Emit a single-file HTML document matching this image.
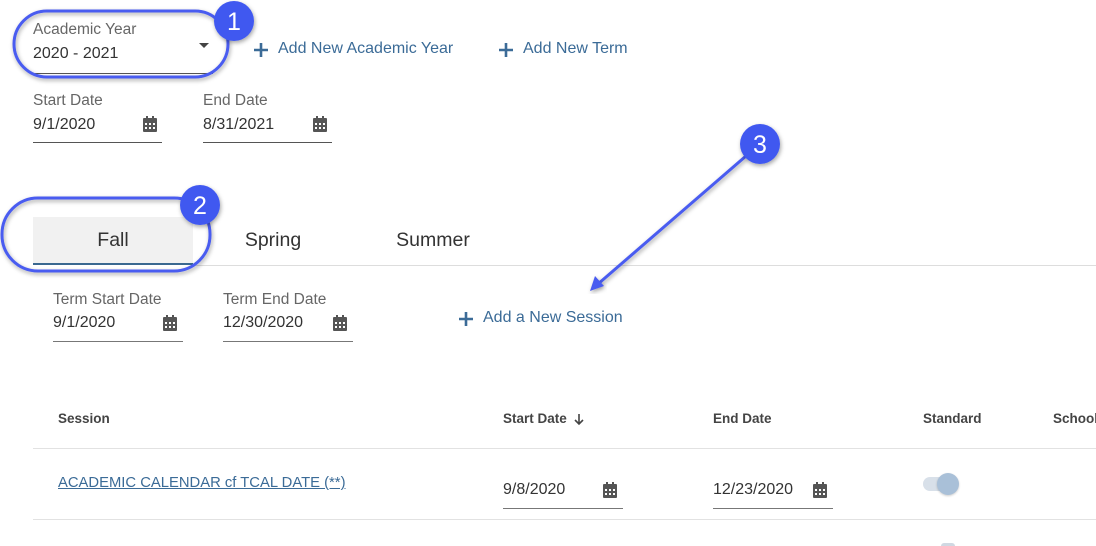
<!DOCTYPE html>
<html style="overflow:hidden;height:546px"><head><style>
body{margin:0;width:1096px;height:546px;overflow:hidden;background:#fff;font-family:"Liberation Sans",sans-serif;position:relative}
.a{position:absolute;white-space:nowrap}
.lbl{font-size:15.5px;color:#666}
.val{font-size:16px;color:#333}
.ul{position:absolute;height:1px;background:#555}
.lnk{font-size:16px;color:#3b6b97}
.th{font-size:13.5px;font-weight:bold;color:#444}
.hl{position:absolute;height:1px;background:#e2e2e2}
</style></head><body>
<svg width="0" height="0" style="position:absolute"><defs>
<symbol id="cal" viewBox="0 0 14 16"><rect x="3" y="0" width="2" height="3" fill="#555"/><rect x="9" y="0" width="2" height="3" fill="#555"/><rect x="0" y="2" width="14" height="14" rx="1" fill="#555"/><g fill="#fff"><rect x="2" y="7" width="2" height="2"/><rect x="6" y="7" width="2" height="2"/><rect x="10" y="7" width="2" height="2"/><rect x="2" y="11" width="2" height="2"/><rect x="6" y="11" width="2" height="2"/><rect x="10" y="11" width="2" height="2"/></g></symbol>
<symbol id="plus" viewBox="0 0 14 14"><path d="M7 0v14M0 7h14" stroke="#3b6b97" stroke-width="2.6"/></symbol>
</defs></svg>

<div class="a lbl" style="left:33px;top:21px">Academic Year</div>
<div class="a val" style="left:33px;top:45px">2020 - 2021</div>
<svg class="a" style="left:199px;top:43px" width="10" height="6"><path d="M0 0h10L5 5z" fill="#444"/></svg>
<div class="ul" style="left:33px;top:73px;width:180px"></div>

<svg class="a" style="left:254px;top:43px" width="14" height="14"><use href="#plus"/></svg>
<div class="a lnk" style="left:278px;top:40px">Add New Academic Year</div>
<svg class="a" style="left:499px;top:43px" width="14" height="14"><use href="#plus"/></svg>
<div class="a lnk" style="left:523px;top:40px">Add New Term</div>

<div class="a lbl" style="left:33px;top:92px">Start Date</div>
<div class="a val" style="left:33px;top:116px">9/1/2020</div>
<svg class="a" style="left:143px;top:116px" width="14" height="16"><use href="#cal"/></svg>
<div class="ul" style="left:33px;top:142px;width:129px"></div>
<div class="a lbl" style="left:203px;top:92px">End Date</div>
<div class="a val" style="left:203px;top:116px">8/31/2021</div>
<svg class="a" style="left:313px;top:116px" width="14" height="16"><use href="#cal"/></svg>
<div class="ul" style="left:203px;top:142px;width:129px"></div>

<div class="a" style="left:33px;top:217px;width:160px;height:46px;background:#f1f1f1"></div>
<div class="a" style="left:33px;top:263px;width:160px;height:2px;background:#3a6890"></div>
<div class="hl" style="left:193px;top:265px;width:903px;background:#ddd"></div>
<div class="a" style="left:33px;top:229px;width:160px;text-align:center;font-size:19.5px;color:#333">Fall</div>
<div class="a" style="left:193px;top:229px;width:160px;text-align:center;font-size:19.5px;color:#333">Spring</div>
<div class="a" style="left:353px;top:229px;width:160px;text-align:center;font-size:19.5px;color:#333">Summer</div>

<div class="a lbl" style="left:53px;top:291px">Term Start Date</div>
<div class="a val" style="left:53px;top:314px">9/1/2020</div>
<svg class="a" style="left:163px;top:315px" width="14" height="16"><use href="#cal"/></svg>
<div class="ul" style="left:53px;top:341px;width:130px;background:#777"></div>
<div class="a lbl" style="left:223px;top:291px">Term End Date</div>
<div class="a val" style="left:223px;top:314px">12/30/2020</div>
<svg class="a" style="left:333px;top:315px" width="14" height="16"><use href="#cal"/></svg>
<div class="ul" style="left:223px;top:341px;width:130px;background:#777"></div>
<svg class="a" style="left:459px;top:312px" width="14" height="14"><use href="#plus"/></svg>
<div class="a lnk" style="left:483px;top:309px">Add a New Session</div>

<div class="a th" style="left:58px;top:411px">Session</div>
<div class="a th" style="left:503px;top:411px">Start Date</div>
<svg class="a" style="left:574px;top:414px" width="10" height="12"><path d="M5 0v10M1 6l4 4 4-4" stroke="#444" stroke-width="1.6" fill="none"/></svg>
<div class="a th" style="left:713px;top:411px">End Date</div>
<div class="a th" style="left:923px;top:411px">Standard</div>
<div class="a th" style="left:1053px;top:411px">School</div>
<div class="hl" style="left:33px;top:448px;width:1063px"></div>
<div class="a" style="left:58px;top:475px;font-size:14.8px;color:#3b6b97;text-decoration:underline">ACADEMIC CALENDAR cf TCAL DATE (**)</div>
<div class="a val" style="left:503px;top:481px">9/8/2020</div>
<svg class="a" style="left:603px;top:482px" width="14" height="16"><use href="#cal"/></svg>
<div class="ul" style="left:503px;top:508px;width:120px;background:#777"></div>
<div class="a val" style="left:713px;top:481px">12/23/2020</div>
<svg class="a" style="left:813px;top:482px" width="14" height="16"><use href="#cal"/></svg>
<div class="ul" style="left:713px;top:508px;width:120px;background:#777"></div>
<div class="a" style="left:923px;top:477px;width:34px;height:14px;border-radius:7px;background:#d8e0e9"></div>
<div class="a" style="left:937px;top:473px;width:22px;height:22px;border-radius:50%;background:#a9c0d8;box-shadow:0 1px 2px rgba(0,0,0,.2)"></div>
<div class="hl" style="left:33px;top:519px;width:1063px"></div>
<div class="a" style="left:941px;top:543px;width:14px;height:3px;border-radius:7px 7px 0 0;background:#d0d8e2"></div>

<svg class="a" style="left:0;top:0" width="1096" height="546">
<defs><filter id="sh" x="-20%" y="-20%" width="140%" height="140%"><feDropShadow dx="1" dy="2" stdDeviation="2" flood-opacity=".35"/></filter></defs>
<g filter="url(#sh)" fill="none" stroke="#4a5cf0" stroke-width="3">
<rect x="14" y="11" width="214" height="66" rx="33"/>
<rect x="2" y="198" width="208" height="73" rx="36"/>
<path d="M746 156L598 284"/>
</g>
<path filter="url(#sh)" d="M590 291l5-15 9 10z" fill="#4a5cf0"/>
<g filter="url(#sh)" fill="#4159f0">
<circle cx="234" cy="21" r="20"/><circle cx="200" cy="205" r="20"/><circle cx="760" cy="144" r="20"/>
</g>
<g fill="#fff" font-family="Liberation Sans" font-size="25" text-anchor="middle">
<text x="234" y="30">1</text><text x="200" y="214">2</text><text x="760" y="153">3</text>
</g>
</svg>
</body></html>
